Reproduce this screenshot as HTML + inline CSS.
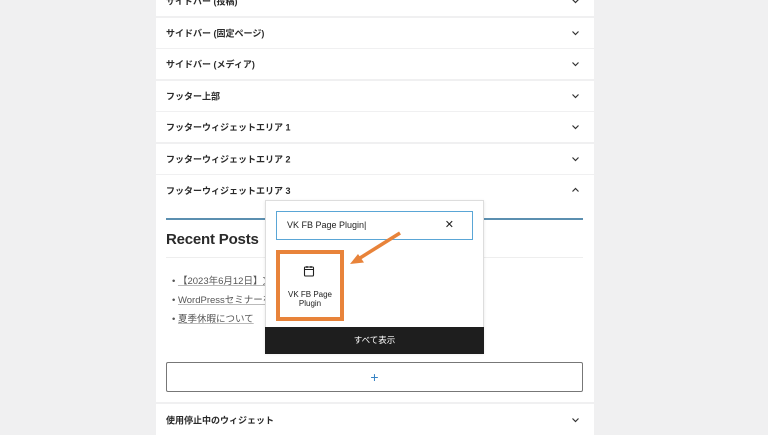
<!DOCTYPE html>
<html><head><meta charset="utf-8"><style>
body{margin:0;width:768px;height:432px;background:#f0f0f1;font-family:"Liberation Sans","Noto Sans CJK JP",sans-serif;position:relative;overflow:hidden}
.panel{position:absolute;left:156px;top:0;width:438px;height:432px;background:#f0f0f1}
.row{position:absolute;left:0;width:438px;height:30px;background:#fff;font-size:9px;font-weight:bold;color:#2a2a2a}
.row span{position:absolute;left:10px;top:50%;transform:translateY(-50%)}
.row svg{position:absolute;right:14px;top:50%;margin-top:-4px}
.abs{position:absolute}
</style></head><body>
<div class="panel">
<div class="row" style="top:-14px"><span>サイドバー (投稿)</span><svg width="9" height="8" viewBox="0 0 9 8"><path d="M1.5 2.5l3 3 3-3" stroke="#333" stroke-width="1.2" fill="none"/></svg></div>
<div class="row" style="top:18px"><span>サイドバー (固定ページ)</span><svg width="9" height="8" viewBox="0 0 9 8"><path d="M1.5 2.5l3 3 3-3" stroke="#333" stroke-width="1.2" fill="none"/></svg></div>
<div class="row" style="top:49px"><span>サイドバー (メディア)</span><svg width="9" height="8" viewBox="0 0 9 8"><path d="M1.5 2.5l3 3 3-3" stroke="#333" stroke-width="1.2" fill="none"/></svg></div>
<div class="row" style="top:81px"><span>フッター上部</span><svg width="9" height="8" viewBox="0 0 9 8"><path d="M1.5 2.5l3 3 3-3" stroke="#333" stroke-width="1.2" fill="none"/></svg></div>
<div class="row" style="top:112px"><span>フッターウィジェットエリア 1</span><svg width="9" height="8" viewBox="0 0 9 8"><path d="M1.5 2.5l3 3 3-3" stroke="#333" stroke-width="1.2" fill="none"/></svg></div>
<div class="row" style="top:144px"><span>フッターウィジェットエリア 2</span><svg width="9" height="8" viewBox="0 0 9 8"><path d="M1.5 2.5l3 3 3-3" stroke="#333" stroke-width="1.2" fill="none"/></svg></div>
<div class="abs" style="left:0;top:175px;width:438px;height:227px;background:#fff">
 <div class="abs" style="left:10px;top:9px;font-size:9px;font-weight:bold;color:#2a2a2a">フッターウィジェットエリア 3</div>
 <svg class="abs" style="left:415px;top:11px" width="9" height="8" viewBox="0 0 9 8"><path d="M1.5 5.5l3-3 3 3" stroke="#333" stroke-width="1.2" fill="none"/></svg>
 <div class="abs" style="left:10px;top:43px;width:417px;height:2px;background:#5b8fb0"></div>
 <div class="abs" style="left:10px;top:56px;font-size:15px;font-weight:bold;color:#2a2a2a;letter-spacing:-0.2px">Recent Posts</div>
 <div class="abs" style="left:10px;top:82px;width:417px;height:1px;background:#eee"></div>
 <div class="abs" style="left:16px;top:97px;font-size:9.5px;color:#555;line-height:19px">• <u style="text-decoration-color:#bbb">【2023年6月12日】文</u><br>• <u style="text-decoration-color:#bbb">WordPressセミナーを</u><br>• <u style="text-decoration-color:#bbb">夏季休暇について</u></div>
 <div class="abs" style="left:10px;top:187px;width:415px;height:28px;border:1px solid #777;border-radius:2px;text-align:center;line-height:28px;color:#3582c4;font-size:14px">+</div>
</div>
<div class="row" style="top:404px;height:31px"><span>使用停止中のウィジェット</span><svg width="9" height="8" viewBox="0 0 9 8"><path d="M1.5 2.5l3 3 3-3" stroke="#333" stroke-width="1.2" fill="none"/></svg></div>
</div>
<div class="abs" style="left:265px;top:200px;width:219px;height:153px;background:#fff;border:1px solid #ddd;box-sizing:border-box;box-shadow:0 1px 3px rgba(0,0,0,.1)">
 <div class="abs" style="left:10px;top:10px;width:197px;height:29px;border:1px solid #5aa6d6;box-sizing:border-box;font-size:9px;color:#1e1e1e;line-height:27px;padding-left:10px">VK FB Page Plugin|<span style="position:absolute;right:18px;font-size:11px">✕</span></div>
 <div class="abs" style="left:10px;top:49px;width:68px;height:71px;border:4px solid #e8833a;box-sizing:border-box"></div>
 <svg class="abs" style="left:37px;top:64px" width="12" height="12" viewBox="0 0 12 12"><rect x="1.5" y="2" width="9" height="9" rx="1" fill="none" stroke="#1e1e1e" stroke-width="1.1"/><path d="M1.5 4.5h9M4 1v2M8 1v2" stroke="#1e1e1e" stroke-width="1.1"/></svg>
 <div class="abs" style="left:14px;top:89px;width:60px;text-align:center;font-size:8px;line-height:9px;color:#1e1e1e">VK FB Page Plugin</div>
 <div class="abs" style="left:-1px;top:126px;width:219px;height:27px;background:#1e1e1e;color:#fff;font-size:8.5px;text-align:center;line-height:27px">すべて表示</div>
</div>
<svg class="abs" style="left:0;top:0" width="768" height="432"><path d="M400 233L360 258" stroke="#e8833a" stroke-width="3.5"/><path d="M350 264l14-1.5-6-8.5z" fill="#e8833a"/></svg>
</body></html>
